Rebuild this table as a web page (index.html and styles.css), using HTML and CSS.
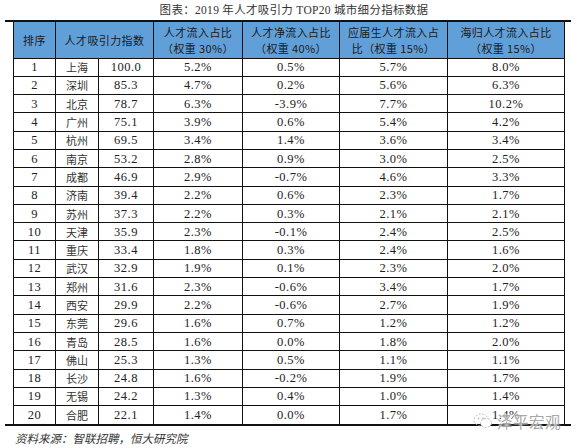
FILE: index.html
```html
<!DOCTYPE html>
<html lang="zh-CN">
<head>
    <meta charset="UTF-8">
    <title>2019 年人才吸引力 TOP20 城市细分指标数据</title>
    <link rel="stylesheet" href="styles.css">
</head>
<body>
    <div class="chart-title">图表：2019 年人才吸引力 TOP20 城市细分指标数据</div>

    <div class="frame">
        <table class="data-table">
            <colgroup>
                <col class="c-rank">
                <col class="c-city">
                <col class="c-index">
                <col class="c-in">
                <col class="c-net">
                <col class="c-grad">
                <col class="c-back">
            </colgroup>
            <thead>
                <tr>
                    <th>排序</th>
                    <th colspan="2">人才吸引力指数</th>
                    <th>人才流入占比<br>（权重 30%）</th>
                    <th>人才净流入占比<br>（权重 40%）</th>
                    <th>应届生人才流入占<br>比（权重 15%）</th>
                    <th>海归人才流入占比<br>（权重 15%）</th>
                </tr>
            </thead>
            <tbody id="rows"></tbody>
        </table>
        <!-- 水印 -->
        <div class="watermark">
            <svg width="20" height="18" viewBox="0 0 20 18">
                <ellipse cx="8" cy="8" rx="7" ry="6" fill="none" stroke="#bbb" stroke-width="1" stroke-dasharray="2 1.5"/>
                <ellipse cx="13" cy="11" rx="5.5" ry="4.5" fill="#fff" stroke="#bbb" stroke-width="1" stroke-dasharray="2 1.5"/>
                <circle cx="5.5" cy="6.5" r="0.9" fill="#bbb"/>
                <circle cx="10" cy="6.5" r="0.9" fill="#bbb"/>
            </svg>
            <span>泽平宏观</span>
        </div>
    </div>

    <div class="source">资料来源：智联招聘，恒大研究院</div>

    <script>
        const data = [
            [1, "上海", "100.0", "5.2%", "0.5%", "5.7%", "8.0%"],
            [2, "深圳", "85.3", "4.7%", "0.2%", "5.6%", "6.3%"],
            [3, "北京", "78.7", "6.3%", "-3.9%", "7.7%", "10.2%"],
            [4, "广州", "75.1", "3.9%", "0.6%", "5.4%", "4.2%"],
            [5, "杭州", "69.5", "3.4%", "1.4%", "3.6%", "3.4%"],
            [6, "南京", "53.2", "2.8%", "0.9%", "3.0%", "2.5%"],
            [7, "成都", "46.9", "2.9%", "-0.7%", "4.6%", "3.3%"],
            [8, "济南", "39.4", "2.2%", "0.6%", "2.3%", "1.7%"],
            [9, "苏州", "37.3", "2.2%", "0.3%", "2.1%", "2.1%"],
            [10, "天津", "35.9", "2.3%", "-0.1%", "2.4%", "2.5%"],
            [11, "重庆", "33.4", "1.8%", "0.3%", "2.4%", "1.6%"],
            [12, "武汉", "32.9", "1.9%", "0.1%", "2.3%", "2.0%"],
            [13, "郑州", "31.6", "2.3%", "-0.6%", "3.4%", "1.7%"],
            [14, "西安", "29.9", "2.2%", "-0.6%", "2.7%", "1.9%"],
            [15, "东莞", "29.6", "1.6%", "0.7%", "1.2%", "1.2%"],
            [16, "青岛", "28.5", "1.6%", "0.0%", "1.8%", "2.0%"],
            [17, "佛山", "25.3", "1.3%", "0.5%", "1.1%", "1.1%"],
            [18, "长沙", "24.8", "1.6%", "-0.2%", "1.9%", "1.7%"],
            [19, "无锡", "24.2", "1.3%", "0.4%", "1.0%", "1.4%"],
            [20, "合肥", "22.1", "1.4%", "0.0%", "1.7%", "1.4%"]
        ];

        const tbody = document.getElementById("rows");
        data.forEach(row => {
            const tr = document.createElement("tr");
            row.forEach((value, i) => {
                const td = document.createElement("td");
                if (i === 1) td.classList.add("city");
                td.textContent = value;
                tr.appendChild(td);
            });
            tbody.appendChild(tr);
        });
    </script>
</body>
</html>
```

FILE: styles.css
```css
* {
    box-sizing: border-box;
    margin: 0;
    padding: 0;
}

body {
    width: 578px;
    height: 448px;
    background-color: #fff;
    color: #222;
    font-family: "Liberation Serif", "Noto Sans CJK SC", serif;
    overflow: hidden;
}

/* 标题 */
.chart-title {
    height: 20px;
    padding-top: 3px;
    padding-left: 10px;
    text-align: center;
    font-size: 11.5px;
    line-height: 15px;
    letter-spacing: 0.3px;
    color: #333;
}

/* 上下粗线 */
.frame {
    position: relative;
    margin: 0 7px 0 5px;
    padding: 0 2px 0 8px;
    border-top: 2px solid #111;
    border-bottom: 2px solid #111;
}

.data-table {
    width: 551px;
    border-collapse: collapse;
    table-layout: fixed;
}

.c-rank { width: 42px; }
.c-city { width: 43px; }
.c-index { width: 55px; }
.c-in { width: 89px; }
.c-net { width: 97px; }
.c-grad { width: 108px; }
.c-back { width: 117px; }

.data-table th {
    height: 36px;
    background-color: #619fd9;
    border: 1px solid #111;
    border-top: none;
    font-family: "Noto Sans CJK SC", sans-serif;
    font-weight: normal;
    font-size: 11px;
    line-height: 16px;
    letter-spacing: 0.4px;
    color: #1a1a1a;
    text-align: center;
}

.data-table td {
    height: 18.3px;
    border: 1px solid #111;
    font-family: "Liberation Serif", "Noto Sans CJK SC", serif;
    font-size: 12.5px;
    letter-spacing: 0.5px;
    line-height: 16px;
    color: #222;
    text-align: center;
}

.data-table tbody tr:last-child td {
    border-bottom: none;
}

.data-table td.city {
    font-family: "Noto Sans CJK SC", sans-serif;
    font-size: 11px;
    letter-spacing: 0;
    color: #333;
}

/* 公众号水印 */
.watermark {
    position: absolute;
    right: 10px;
    bottom: -8px;
    display: flex;
    align-items: center;
    gap: 4px;
}

.watermark span {
    font-family: "Noto Sans CJK SC", sans-serif;
    font-size: 15.5px;
    color: #a8a8a8;
    letter-spacing: 0.5px;
    text-shadow: 0 0 2px #fff, 0 0 2px #fff;
}

/* 资料来源 */
.source {
    padding: 4px 0 0 15px;
    font-family: "Noto Sans CJK SC", sans-serif;
    font-style: italic;
    font-size: 11.5px;
    color: #333;
}
```
